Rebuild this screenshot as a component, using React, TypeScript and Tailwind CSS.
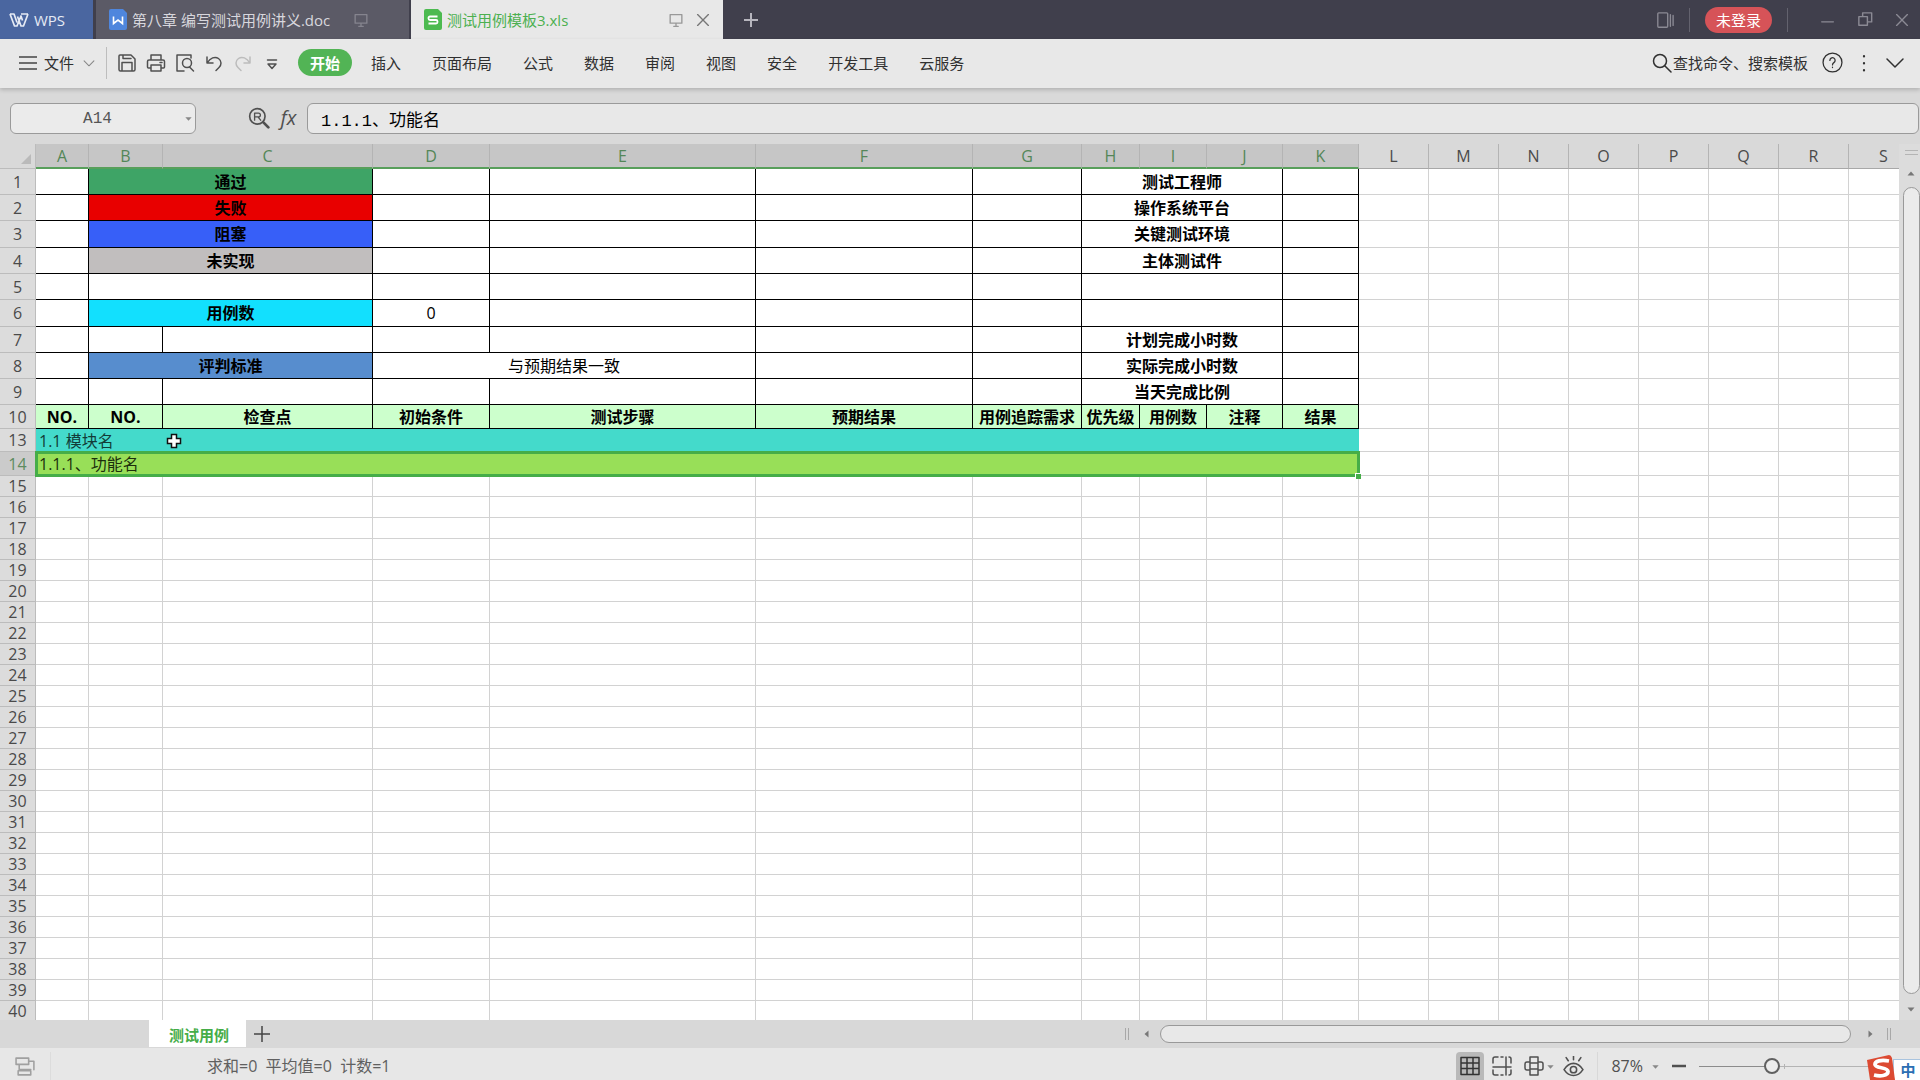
import { useState, type ReactNode } from "react";
// others
import clsx from "clsx";

// constants
const columns = [
  { name: "A", width: "w-[53px]" },
  { name: "B", width: "w-[74px]" },
  { name: "C", width: "w-[210px]" },
  { name: "D", width: "w-[117px]" },
  { name: "E", width: "w-[266px]" },
  { name: "F", width: "w-[217px]" },
  { name: "G", width: "w-[109px]" },
  { name: "H", width: "w-[58px]" },
  { name: "I", width: "w-[67px]" },
  { name: "J", width: "w-[76px]" },
  { name: "K", width: "w-[76px]" },
  { name: "L", width: "w-[70px]" },
  { name: "M", width: "w-[70px]" },
  { name: "N", width: "w-[70px]" },
  { name: "O", width: "w-[70px]" },
  { name: "P", width: "w-[70px]" },
  { name: "Q", width: "w-[70px]" },
  { name: "R", width: "w-[70px]" },
  { name: "S", width: "w-[70px]" },
];

// columns A to K are inside the selection
const SELECTED = 11;

type Cell = { text?: string; span?: number; className?: string };

const e: Cell = {};
const merged = (text: string, className = ""): Cell => ({ text, span: 2, className: `font-bold ${className}` });
const label = (text = ""): Cell => ({ text, span: 3, className: "font-bold" });

const topRows: { no: number; height: string; cells: Cell[] }[] = [
  { no: 1, height: "h-[26px]", cells: [e, merged("通过", "bg-[#3ea466]"), e, e, e, e, label("测试工程师"), e] },
  { no: 2, height: "h-[26px]", cells: [e, merged("失败", "bg-[#e80000]"), e, e, e, e, label("操作系统平台"), e] },
  { no: 3, height: "h-[27px]", cells: [e, merged("阻塞", "bg-[#375ff8]"), e, e, e, e, label("关键测试环境"), e] },
  { no: 4, height: "h-[26px]", cells: [e, merged("未实现", "bg-[#c1bebe]"), e, e, e, e, label("主体测试件"), e] },
  { no: 5, height: "h-[26px]", cells: [e, merged(""), e, e, e, e, label(), e] },
  { no: 6, height: "h-[27px]", cells: [e, merged("用例数", "bg-[#12e0fe]"), { text: "0" }, e, e, e, label(), e] },
  { no: 7, height: "h-[26px]", cells: [e, e, e, e, e, e, e, label("计划完成小时数"), e] },
  { no: 8, height: "h-[26px]", cells: [e, merged("评判标准", "bg-[#578dce]"), { text: "与预期结果一致", span: 2 }, e, e, label("实际完成小时数"), e] },
  { no: 9, height: "h-[26px]", cells: [e, e, e, e, e, e, e, label("当天完成比例"), e] },
];

const headings = ["NO.", "NO.", "检查点", "初始条件", "测试步骤", "预期结果", "用例追踪需求", "优先级", "用例数", "注释", "结果"];
const menus = ["插入", "页面布局", "公式", "数据", "审阅", "视图", "安全", "开发工具", "云服务"];
const emptyRows = Array.from({ length: 26 }, (_, i) => i + 15);

/*--- icons ---*/
function Icon({ children, className = "size-5", width = 1.5 }: { children: ReactNode; className?: string; width?: number }) {
  return (
    <svg
      viewBox="0 0 20 20"
      className={`${className} shrink-0`}
      fill="none"
      stroke="currentColor"
      strokeWidth={width}
      strokeLinecap="round"
      strokeLinejoin="round"
      aria-hidden="true"
    >
      {children}
    </svg>
  );
}

const monitor = <path d="M3.500 4h13v9.500h-13zM10 13.500V17M7.500 17h5" />;
const cross = <path d="m4 4 12 12M16 4 4 16" />;
const triangleDown = <path d="M3 7h14l-7 8z" fill="currentColor" stroke="none" />;

function FileBadge({ sheet }: { sheet?: boolean }) {
  return (
    <svg viewBox="0 0 18 21" className="h-[21px] w-[18px] shrink-0" fill="none" aria-hidden="true">
      <path d="M2 0h12l4 4v15a2 2 0 0 1-2 2H2a2 2 0 0 1-2-2V2a2 2 0 0 1 2-2Z" fill={sheet ? "#4cba50" : "#4f86dd"} />
      {sheet ? (
        <path d="M13.500 7.500H6A1.500 1.500 0 0 0 4.500 9v.5A1.500 1.500 0 0 0 6 11h6a1.500 1.500 0 0 1 1.500 1.500v.5a1.500 1.500 0 0 1-1.500 1.500H4.500" stroke="#fff" strokeWidth="1.800" />
      ) : (
        <path d="M4.500 7.500v7L9 11l4.500 3.500v-7" stroke="#fff" strokeWidth="1.600" />
      )}
    </svg>
  );
}

/*--- title bar ---*/
function TitleBar() {
  return (
    <header className="flex h-[39px] shrink-0 items-stretch bg-[#403f4c] text-[#d8d7dd]">
      <button className="mr-[3px] flex w-[93px] items-center gap-[5px] bg-[#4a66a0] pl-[9px] text-[15px] text-[#e5eaf4]">
        <svg viewBox="0 0 20 14" className="h-[14px] w-[20px]" fill="none" stroke="currentColor" strokeWidth="1.700" strokeLinejoin="round" aria-hidden="true">
          <path d="M1 1h4l3 8.500M1 1l4.500 12H8l4-10 1.500 4.500M19 1l-4.500 12H12L8.500 3.500M19 1h-7" />
        </svg>
        WPS
      </button>
      <button className="flex w-[315px] items-center gap-[5px] border-r-2 border-[#403f4c] bg-[#5b5a66] pl-[13px]">
        <FileBadge />
        <span className="grow text-left whitespace-nowrap">第八章 编写测试用例讲义.doc</span>
        <Icon className="mr-[39px] size-[18px] text-[#85848e]">{monitor}</Icon>
      </button>
      <div className="flex w-[312px] items-center bg-[#e8e8e8] pr-[11px] pl-[13px] text-[#4cb050]">
        <FileBadge sheet />
        <span className="ml-[5px] grow whitespace-nowrap">测试用例模板3.xls</span>
        <Icon className="mr-[9px] size-[18px] text-[#999]">{monitor}</Icon>
        <button aria-label="关闭标签" className="text-[#777]">
          <Icon className="size-[18px]">{cross}</Icon>
        </button>
      </div>
      <button aria-label="新建" className="ml-[18px] text-[#b7b6be]">
        <Icon width={2}>
          <path d="M10 3v14M3 10h14" strokeLinecap="butt" />
        </Icon>
      </button>
      <div className="ml-auto flex items-center pr-[9px] text-[#8b8a94]">
        <button aria-label="窗口管理">
          <Icon className="size-[18px]">
            <path d="M3 2h9a1 1 0 0 1 1 1v14a1 1 0 0 1-1 1H3a1 1 0 0 1-1-1V3a1 1 0 0 1 1-1zM16 4v13M19 5v11" />
          </Icon>
        </button>
        <span className="mx-[15px] h-6 w-px bg-[#63626e]" />
        <button className="h-[26px] w-[67px] rounded-full bg-[#d65358] text-white">未登录</button>
        <span className="mx-[15px] h-6 w-px bg-[#63626e]" />
        <button aria-label="最小化" className="ml-[16px]">
          <Icon className="size-[18px]">
            <path d="M3 12h13" />
          </Icon>
        </button>
        <button aria-label="还原" className="ml-[19px]">
          <Icon className="size-[19px]">
            <path d="M3 7h9v9H3zM7 7V3h9.500v9.500H12" />
          </Icon>
        </button>
        <button aria-label="关闭" className="ml-[18px]">
          <Icon className="size-[18px]">{cross}</Icon>
        </button>
      </div>
    </header>
  );
}

/*--- menu bar ---*/
function MenuBar() {
  return (
    <nav className="z-[1] flex h-[49px] shrink-0 items-center bg-[#e8e8e8] pb-[2px] text-[#303030] shadow-[0_2px_4px_rgba(0,0,0,0.18)]">
      <button className="ml-[18px] flex items-center">
        <Icon className="mr-[6px] size-5 text-[#444]">
          <path d="M1 4h18M1 10h18M1 16h18" strokeLinecap="butt" />
        </Icon>
        文件
        <Icon className="mr-px ml-[8px] size-[14px] text-[#888]">
          <path d="m3 7 7 7 7-7" />
        </Icon>
      </button>
      <span className="mr-[10px] ml-[9px] h-8 w-px bg-[#bdbdbd]" />
      <div className="flex items-center gap-[9px] text-[#505050]">
        <button aria-label="保存">
          <Icon>
            <path d="M3 2h11l4 4v10.500A1.500 1.500 0 0 1 16.500 18h-13A1.500 1.500 0 0 1 2 16.500V3a1 1 0 0 1 1-1ZM5 18V9.500h10V18M6 2v3.500h8" />
          </Icon>
        </button>
        <button aria-label="打印">
          <Icon>
            <path d="M5 7V2h10v5M4 15H2.500A1 1 0 0 1 1.500 14V8.500A1.500 1.500 0 0 1 3 7h14a1.500 1.500 0 0 1 1.500 1.500V14a1 1 0 0 1-1 1H16M5 12h10v6H5zM14 9.500h2" />
          </Icon>
        </button>
        <button aria-label="打印预览">
          <Icon>
            <path d="M9 18H2V2h14v3M14.500 14l4 4" />
            <circle cx="12" cy="10" r="4.500" />
          </Icon>
        </button>
        <button aria-label="撤销">
          <Icon>
            <path d="M3 4v6h6M3.500 9.500C6 5 11 3 14.500 5.500s3 6.500.5 9L12 17.500" />
          </Icon>
        </button>
        <button aria-label="恢复" className="text-[#bcbcbc]" disabled>
          <Icon>
            <path d="M17 4v6h-6M16.500 9.500C14 5 9 3 5.500 5.500s-3 6.500-.5 9L8 17.500" />
          </Icon>
        </button>
        <button aria-label="自定义快速访问工具栏">
          <Icon>
            <path d="M5.500 7h9M6 11h8l-4 4.500z" />
          </Icon>
        </button>
      </div>
      <button className="ml-[16px] h-[27px] w-[54px] rounded-full bg-[#52b455] font-bold text-white">开始</button>
      <div className="ml-[19px] flex gap-[31px] whitespace-nowrap">
        {menus.map((menu) => (
          <button key={menu}>{menu}</button>
        ))}
      </div>
      <div className="ml-auto flex items-center pr-[15px] whitespace-nowrap">
        <button className="flex items-center">
          <Icon className="mr-px size-5">
            <circle cx="8" cy="8" r="6.500" />
            <path d="m13 13 6 6" />
          </Icon>
          查找命令、搜索模板
        </button>
        <button aria-label="帮助" className="ml-[14px]">
          <Icon className="size-[21px]" width={1.2}>
            <circle cx="10" cy="10" r="9" />
            <path d="M7.500 8a2.500 2.500 0 1 1 3.800 2.100c-.9.600-1.300 1-1.300 2.200M10 14.500v.3" />
          </Icon>
        </button>
        <button aria-label="更多" className="ml-[11px]">
          <Icon>
            <path d="M10 3v.5M10 10v.5M10 17v.5" strokeWidth="2.200" />
          </Icon>
        </button>
        <button aria-label="收起功能区" className="ml-[11px]">
          <Icon>
            <path d="m2 6 8 8 8-8" />
          </Icon>
        </button>
      </div>
    </nav>
  );
}

/*--- formula bar ---*/
function FormulaBar() {
  return (
    <div className="flex h-[56px] shrink-0 items-center bg-[#d9d9d9] pt-[4px] pl-[10px]">
      <div className="flex h-[31px] w-[186px] items-center rounded-md border border-[#9a9a9a] bg-[#ebebeb] pr-[2px]">
        <input
          aria-label="名称框"
          defaultValue="A14"
          className="h-full w-0 grow pt-[2px] text-center font-['Liberation_Mono',monospace] text-[16px] text-[#555] outline-none"
        />
        <button aria-label="选择名称" className="text-[#888]">
          <Icon className="size-[9px]">{triangleDown}</Icon>
        </button>
      </div>
      <button aria-label="浏览公式结果" className="ml-[52px] text-[#505050]">
        <Icon className="size-[22px]">
          <circle cx="8.500" cy="8.500" r="7" />
          <path d="m14 14 4.500 4.500" strokeWidth="2.500" />
          <path d="M6 12V5.500h3.500a1.700 1.700 0 0 1 0 3.500H6M9 9l2.500 3" strokeWidth="1.200" />
        </Icon>
      </button>
      <button aria-label="插入函数" className="w-[36px] pl-px text-[20px] leading-[24px] text-[#505050] italic">
        fx
      </button>
      <input
        aria-label="编辑栏"
        defaultValue="1.1.1、功能名"
        className="mr-px ml-px h-[31px] w-0 grow rounded-md border border-[#9a9a9a] bg-[#e8e8e8] px-[13px] font-['Liberation_Mono','Noto_Sans_CJK_SC',monospace] text-[17px] text-black outline-none"
      />
    </div>
  );
}

/*--- sheet ---*/
function RowHead({ no, active }: { no: number; active?: boolean }) {
  return (
    <th
      scope="row"
      className={clsx(
        "border-r border-b border-[#bcbcbc] p-0 text-center font-normal",
        active ? "bg-[#cbcbcb] text-[#5d8c60]" : "bg-[#dcdcdc] text-[#4a4a4a]"
      )}
    >
      {no}
    </th>
  );
}

// columns L to S, with plain grid lines
function PlainCells({ from = SELECTED }: { from?: number }) {
  return columns.slice(from).map((column) => <td key={column.name} className="border-r border-b border-[#d2d2d2] p-0" />);
}

function Sheet() {
  return (
    <table className="w-[1919px] table-fixed border-separate border-spacing-0 text-[16px] leading-[16px] whitespace-nowrap text-black">
      <colgroup>
        <col className="w-[36px]" />
        {columns.map((column) => (
          <col key={column.name} className={column.width} />
        ))}
      </colgroup>
      <thead>
        <tr className="h-[25px]">
          <th className="border-r border-b border-[#bcbcbc] bg-[#d9d9d9] p-0">
            <svg viewBox="0 0 10 10" className="mt-[6px] mr-[4px] ml-auto size-[10px]" aria-hidden="true">
              <path d="M10 0v10H0z" fill="#bababa" />
            </svg>
          </th>
          {columns.map((column, i) => (
            <th
              key={column.name}
              scope="col"
              className={clsx(
                "border-r border-r-[#b4b4b4] p-0 text-center font-normal",
                i < SELECTED ? "border-b-2 border-b-[#589f5b] bg-[#c6c6c6] text-[#548658]" : "border-b border-b-[#a8a8a8] bg-[#d9d9d9] text-[#4a4a4a]"
              )}
            >
              {column.name}
            </th>
          ))}
        </tr>
      </thead>
      <tbody>
        {topRows.map((row) => (
          <tr key={row.no} className={row.height}>
            <RowHead no={row.no} />
            {row.cells.map((cell, i) => (
              <td key={i} colSpan={cell.span} className={clsx("border-r border-b border-black p-0 text-center", cell.className)}>
                {cell.text}
              </td>
            ))}
            <PlainCells />
          </tr>
        ))}
        <tr className="h-[24px]">
          <RowHead no={10} />
          {headings.map((heading, i) => (
            <td key={i} className="border-r border-b border-black bg-[#ccffcc] p-0 text-center font-bold">
              {heading}
            </td>
          ))}
          <PlainCells />
        </tr>
        <tr className="h-[23px]">
          <RowHead no={13} />
          <td colSpan={SELECTED} className="relative bg-[#44dacb] p-0 pl-[3px] text-[#123c38]">
            1.1 模块名
            {/*--- cell cursor ---*/}
            <svg viewBox="0 0 16 16" className="absolute top-[4px] left-[130px] size-4" aria-hidden="true">
              <path d="M5.500 1.500h5v4h4v5h-4v4h-5v-4h-4v-5h4z" fill="#fff" stroke="#111" strokeWidth="1.500" />
            </svg>
          </td>
          <PlainCells />
        </tr>
        <tr className="h-[24px]">
          <RowHead no={14} active />
          <td colSpan={SELECTED} className="relative bg-[#98df58] p-0 pl-[3px] text-[#1c2f0c]">
            1.1.1、功能名
            {/*--- selection frame ---*/}
            <span className="absolute -inset-x-px -top-px -bottom-px border-3 border-[#45ad48]" />
            <span className="absolute -right-[2px] -bottom-[3px] size-[6px] border-t border-l border-white bg-[#45ad48]" />
          </td>
          <PlainCells />
        </tr>
        {emptyRows.map((no) => (
          <tr key={no} className="h-[21px]">
            <RowHead no={no} />
            <PlainCells from={0} />
          </tr>
        ))}
      </tbody>
    </table>
  );
}

function VerticalScroll() {
  return (
    <div className="flex w-[21px] shrink-0 flex-col items-center bg-[#dcdcdc] pl-[3px] text-[#777]">
      <span className="mt-[6px] mb-[14px] h-[5px] w-[13px] border-y border-[#b4b4b4]" />
      <button aria-label="向上滚动">
        <Icon className="size-[10px] rotate-180">{triangleDown}</Icon>
      </button>
      <div className="mt-[8px] w-[17px] grow rounded-full border border-[#999] bg-[#ebebeb]" />
      <button aria-label="向下滚动" className="mt-[10px] mb-[6px]">
        <Icon className="size-[10px]">{triangleDown}</Icon>
      </button>
    </div>
  );
}

/*--- sheet tabs + horizontal scroll ---*/
function SheetTabs() {
  return (
    <div className="flex h-[28px] shrink-0 bg-[#d8d8d8]">
      <div className="flex grow pl-[149px]">
        <button className="h-[27px] w-[97px] bg-white pt-[2px] pl-[3px] font-bold text-[#45ad48]">测试用例</button>
        <button aria-label="新建工作表" className="ml-[6px] text-[#444]">
          <Icon>
            <path d="M10 2v16M2 10h16" strokeLinecap="butt" />
          </Icon>
        </button>
      </div>
      <div className="flex w-5/12 items-center pr-[29px] pl-[5px] text-[#777]">
        <span className="h-3 w-[4px] border-x border-[#a8a8a8]" />
        <button aria-label="向左滚动" className="mr-[8px] ml-[13px]">
          <Icon className="size-[10px] rotate-90">{triangleDown}</Icon>
        </button>
        <div className="h-[18px] grow rounded-full border border-[#999] bg-[#e8e8e8]" />
        <button aria-label="向右滚动" className="mr-[12px] ml-[14px]">
          <Icon className="size-[10px] -rotate-90">{triangleDown}</Icon>
        </button>
        <span className="h-3 w-[4px] border-x border-[#a8a8a8]" />
      </div>
    </div>
  );
}

/*--- status bar ---*/
function StatusBar() {
  const [zoom, setZoom] = useState(42);

  return (
    <footer className="relative flex h-[32px] shrink-0 items-center bg-[#e7e7e7] pt-[4px] text-[16px] text-[#505050]">
      <Icon className="ml-[15px] size-[21px] text-[#a0a0a0]">
        <path d="M1 2h12v6H1zM13 5h5v8M4 8v5h11M3 14h12v4H3z" />
      </Icon>
      <span className="ml-[14px] h-full w-px bg-[#dcdcdc]" />
      <span className="ml-[156px] whitespace-pre text-[#606060]">求和=0  平均值=0  计数=1</span>
      <div className="ml-auto flex h-full items-center pr-[51px]">
        <button aria-label="普通视图" className="flex h-[29px] w-[28px] items-center justify-center rounded-t bg-[#b9b9b9] text-[#333]">
          <Icon>
            <path d="M1 1.500h18v17H1zM7 1.500v17M13 1.500v17M1 7h18M1 12.500h18" />
          </Icon>
        </button>
        <button aria-label="分页预览" className="ml-[8px]">
          <Icon>
            <path d="M1 7V3a2 2 0 0 1 2-2h3M9 1h2M1 14v3a2 2 0 0 0 2 2h3M9 19h2M14 1v18M1 11h18M17 1a2 2 0 0 1 2 2v4M19 14v3a2 2 0 0 1-2 2" />
          </Icon>
        </button>
        <button aria-label="页面布局" className="ml-[12px] flex items-center">
          <Icon>
            <path d="M6 1h8v18H6zM6 7h8M6 13h8M6 6H3a2 2 0 0 0-2 2v4a2 2 0 0 0 2 2h3M14 6h3a2 2 0 0 1 2 2v4a2 2 0 0 1-2 2h-3" />
          </Icon>
          <Icon className="ml-[2px] size-[9px] text-[#888]">{triangleDown}</Icon>
        </button>
        <button aria-label="护眼模式" className="ml-[8px]">
          <Icon className="size-[21px]">
            <path d="M1 13c5-8 13-8 18 0-5 7.500-13 7.500-18 0ZM10 0v3.500M3 1.500l2 3M17 1.500l-2 3" />
            <circle cx="10" cy="13" r="3" />
          </Icon>
        </button>
        <span className="mx-[13px] h-full w-px bg-[#d8d8d8]" />
        <button className="flex items-center" aria-label="缩放级别">
          87%
          <Icon className="ml-[8px] size-[9px] text-[#888]">{triangleDown}</Icon>
        </button>
        <button aria-label="缩小" className="ml-[9px]">
          <Icon width={2.5}>
            <path d="M3 10h14" strokeLinecap="butt" />
          </Icon>
        </button>
        <div className="relative ml-[10px] flex w-[170px] items-center">
          <input
            type="range"
            aria-label="显示比例"
            value={zoom}
            onChange={(event) => setZoom(Number(event.target.value))}
            className="h-4 w-full appearance-none bg-[linear-gradient(90deg,#8c8c8c_42%,#b4b4b4_42%)] bg-[length:100%_1px] bg-center bg-no-repeat [&::-webkit-slider-thumb]:size-4 [&::-webkit-slider-thumb]:appearance-none [&::-webkit-slider-thumb]:rounded-full [&::-webkit-slider-thumb]:border-2 [&::-webkit-slider-thumb]:border-[#606060] [&::-webkit-slider-thumb]:bg-[#ececec]"
          />
          {/*--- 100% mark ---*/}
          <span className="absolute left-1/2 h-[5px] w-px bg-[#b4b4b4]" />
        </div>
      </div>
      {/*--- input method badge floating over the corner ---*/}
      <div className="absolute right-0 bottom-0 flex items-end">
        <svg viewBox="0 0 28 25" className="z-[1] h-[25px] w-[28px]" aria-hidden="true">
          <path d="M0 5 22 0q2 0 3 3l3 22H3z" fill="#dc4a32" />
          <path d="M22 6C14 4.500 8 6 8 9.500c0 4 13 2.500 13 7 0 4.500-8 5-14 3.500" fill="none" stroke="#fff" strokeWidth="3.800" />
        </svg>
        <button className="-ml-[2px] h-[21px] w-[27px] border-t border-l border-[#a9c4df] bg-white pl-[2px] text-[15px] leading-[20px] font-bold text-[#2c6fb3]">中</button>
      </div>
    </footer>
  );
}

export default function App() {
  return (
    <div className="flex h-screen flex-col overflow-hidden bg-[#d9d9d9] font-['Open_Sans','Noto_Sans_CJK_SC',sans-serif] text-[15px] leading-[20px]">
      <TitleBar />
      <MenuBar />
      <FormulaBar />
      <main className="flex min-h-0 grow">
        <div className="w-0 grow overflow-hidden bg-white">
          <Sheet />
        </div>
        <VerticalScroll />
      </main>
      <SheetTabs />
      <StatusBar />
    </div>
  );
}
